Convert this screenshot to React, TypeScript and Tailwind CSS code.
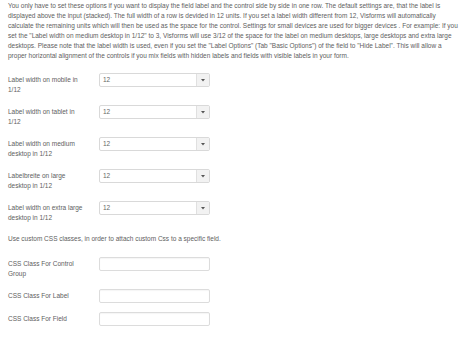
import React from "react";

const selectRows: string[][] = [
  ["Label width on mobile in", "1/12"],
  ["Label width on tablet in", "1/12"],
  ["Label width on medium", "desktop in 1/12"],
  ["Labelbreite on large", "desktop in 1/12"],
  ["Label width on extra large", "desktop in 1/12"],
];

const inputRows: string[][] = [
  ["CSS Class For Control", "Group"],
  ["CSS Class For Label"],
  ["CSS Class For Field"],
];

function Label({ lines }: { lines: string[] }) {
  return (
    <div className="w-[90.5px] shrink-0 pt-[2px] pb-[1px]">
      {lines.map((l, i) => (
        <div key={i} className="whitespace-nowrap">
          {l}
        </div>
      ))}
    </div>
  );
}

function Select() {
  return (
    <div className="flex h-[14px] w-[111px] items-stretch rounded-[2px] border border-[#d9d9d9] bg-white">
      <div className="flex flex-1 items-center pl-[3.5px] text-[#666]">12</div>
      <div className="flex w-[13px] items-center justify-center border-l border-[#e0e0e0] bg-[#f2f2f2]">
        <svg width="4" height="3" viewBox="0 0 4 3">
          <path d="M0 0 H4 L2 2.5 Z" fill="#555" />
        </svg>
      </div>
    </div>
  );
}

function Input() {
  return (
    <div className="h-[14px] w-[111px] rounded-[2px] border border-[#dcdcdc] bg-white shadow-[inset_0_1px_1px_rgba(0,0,0,0.04)]" />
  );
}

export default function App() {
  return (
    <div
      className="h-[345px] w-[474px] overflow-hidden bg-white pl-[8px] pr-[2px] text-[6.5px] leading-[10px] text-[#606060]"
      style={{ fontFamily: '"Liberation Sans", Arial, sans-serif' }}
    >
      <p className="whitespace-nowrap pt-[1px]">
        You only have to set these options if you want to display the field label and the control side by side in one row. The default settings are, that the label is
        <br />
        displayed above the input (stacked). The full width of a row is devided in 12 units. If you set a label width different from 12, Visforms will automatically
        <br />
        calculate the remaining units which will then be used as the space for the control. Settings for small devices are used for bigger devices . For example: If you
        <br />
        set the "Label width on medium desktop in 1/12" to 3, Visforms will use 3/12 of the space for the label on medium desktops, large desktops and extra large
        <br />
        desktops. Please note that the label width is used, even if you set the "Label Options" (Tab "Basic Options") of the field to "Hide Label". This will allow a
        <br />
        proper horizontal alignment of the controls if you mix fields with hidden labels and fields with visible labels in your form.
      </p>

      <div className="mt-[12px] flex flex-col">
        {selectRows.map((lines, i) => (
          <div key={i} className="mb-[9px] flex items-start">
            <Label lines={lines} />
            <Select />
          </div>
        ))}
      </div>

      <p className="mt-[1px] whitespace-nowrap">
        Use custom CSS classes, in order to attach custom Css to a specific field.
      </p>

      <div className="mt-[13px] flex flex-col">
        {inputRows.map((lines, i) => (
          <div key={i} className="mb-[9px] flex items-start">
            <Label lines={lines} />
            <Input />
          </div>
        ))}
      </div>
    </div>
  );
}
